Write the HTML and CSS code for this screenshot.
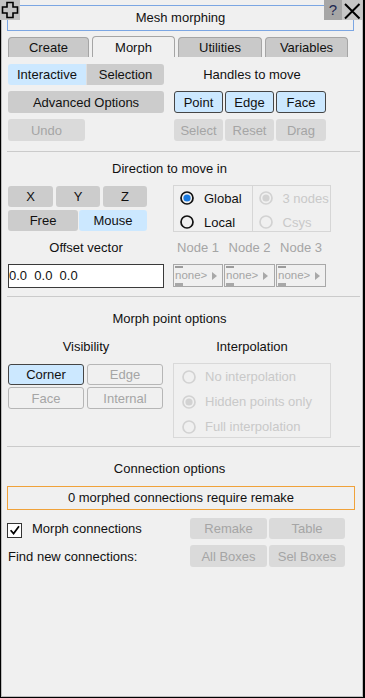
FILE: index.html
```html
<!DOCTYPE html>
<html lang="en">
<head>
    <meta charset="UTF-8">
    <meta name="viewport" content="width=device-width, initial-scale=1.0">
    <title>Mesh morphing</title>
    <link rel="stylesheet" href="styles.css">
</head>
<body>
    <div class="window">
        <div class="frame">
            <!-- window chrome -->
            <div class="grip">
                <svg width="20" height="20" viewBox="0 0 20 20"><path d="M7 2.5H13V7H17.5V13H13V17.5H7V13H2.5V7H7Z" fill="none" stroke="#000" stroke-width="1.6"/></svg>
            </div>
            <div class="win-btns">
                <span class="win-help">?</span>
                <span class="win-close">
                    <svg width="20" height="20" viewBox="0 0 20 20"><path d="M3 4L17.5 18.5M17.5 4L3 18.5" stroke="#000" stroke-width="2"/></svg>
                </span>
            </div>

            <div class="title">Mesh morphing</div>

            <div class="tabs">
                <div class="tab tab-create">Create</div>
                <div class="tab active">Morph</div>
                <div class="tab tab-utilities">Utilities</div>
                <div class="tab">Variables</div>
            </div>

            <!-- mode / handles -->
            <div class="top-grid">
                <div class="seg">
                    <span class="btn on">Interactive</span>
                    <span class="btn">Selection</span>
                </div>
                <div class="label">Handles to move</div>
                <div class="btn">Advanced Options</div>
                <div class="btn-row">
                    <span class="btn on framed">Point</span>
                    <span class="btn on framed">Edge</span>
                    <span class="btn on framed">Face</span>
                </div>
                <div class="btn off undo">Undo</div>
                <div class="btn-row">
                    <span class="btn off">Select</span>
                    <span class="btn off">Reset</span>
                    <span class="btn off">Drag</span>
                </div>
            </div>

            <div class="sep sep-first"></div>

            <!-- direction -->
            <div class="heading heading-dir">Direction to move in</div>
            <div class="dir-grid">
                <div>
                    <div class="axis-row">
                        <span class="btn axis-x">X</span>
                        <span class="btn">Y</span>
                        <span class="btn">Z</span>
                    </div>
                    <div class="mode-row">
                        <span class="btn free">Free</span>
                        <span class="btn on mouse">Mouse</span>
                    </div>
                </div>
                <div class="radio-box">
                    <div class="radio-col">
                        <div class="opt">
                            <svg class="radio" width="14" height="14" viewBox="0 0 14 14"><circle cx="7" cy="7" r="6" fill="none" stroke="#111" stroke-width="1.7"/><circle cx="7" cy="7" r="3.6" fill="#1a7ae0"/></svg>
                            Global
                        </div>
                        <div class="opt">
                            <svg class="radio" width="14" height="14" viewBox="0 0 14 14"><circle cx="7" cy="7" r="6" fill="none" stroke="#111" stroke-width="1.7"/></svg>
                            Local
                        </div>
                    </div>
                    <div class="radio-col disabled">
                        <div class="opt">
                            <svg class="radio" width="14" height="14" viewBox="0 0 14 14"><circle cx="7" cy="7" r="6" fill="none" stroke="#d2d2d2" stroke-width="1.7"/><circle cx="7" cy="7" r="3.6" fill="#d2d2d2"/></svg>
                            3 nodes
                        </div>
                        <div class="opt">
                            <svg class="radio" width="14" height="14" viewBox="0 0 14 14"><circle cx="7" cy="7" r="6" fill="none" stroke="#d2d2d2" stroke-width="1.7"/></svg>
                            Csys
                        </div>
                    </div>
                </div>
            </div>

            <div class="io-grid">
                <div class="label">Offset vector</div>
                <div class="node-row node-labels">
                    <span>Node 1</span>
                    <span class="mid">Node 2</span>
                    <span>Node 3</span>
                </div>
                <div class="vec">0.0  0.0  0.0</div>
                <div class="node-row">
                    <span class="node">none&gt;<i class="tri"></i></span>
                    <span class="node mid">none&gt;<i class="tri"></i></span>
                    <span class="node">none&gt;<i class="tri"></i></span>
                </div>
            </div>

            <div class="sep"></div>

            <!-- morph point options -->
            <div class="heading">Morph point options</div>
            <div class="sub-grid">
                <div class="label">Visibility</div>
                <div class="label">Interpolation</div>
            </div>
            <div class="point-grid">
                <div class="vis">
                    <span class="btn on framed">Corner</span>
                    <span class="btn ghost">Edge</span>
                    <span class="btn ghost">Face</span>
                    <span class="btn ghost">Internal</span>
                </div>
                <div class="interp disabled">
                    <div class="opt">
                        <svg class="radio" width="14" height="14" viewBox="0 0 14 14"><circle cx="7" cy="7" r="6" fill="none" stroke="#d2d2d2" stroke-width="1.7"/></svg>
                        No interpolation
                    </div>
                    <div class="opt">
                        <svg class="radio" width="14" height="14" viewBox="0 0 14 14"><circle cx="7" cy="7" r="6" fill="none" stroke="#d2d2d2" stroke-width="1.7"/><circle cx="7" cy="7" r="3.6" fill="#d2d2d2"/></svg>
                        Hidden points only
                    </div>
                    <div class="opt">
                        <svg class="radio" width="14" height="14" viewBox="0 0 14 14"><circle cx="7" cy="7" r="6" fill="none" stroke="#d2d2d2" stroke-width="1.7"/></svg>
                        Full interpolation
                    </div>
                </div>
            </div>

            <div class="sep"></div>

            <!-- connections -->
            <div class="heading">Connection options</div>
            <div class="notice">0 morphed connections require remake</div>
            <div class="conn-grid">
                <label class="check-label">
                    <span class="checkbox">
                        <svg width="13" height="13" viewBox="0 0 13 13"><path d="M2.6 6.2L5.6 9.6L11 2.2" fill="none" stroke="#000" stroke-width="1.7"/></svg>
                    </span>
                    Morph connections
                </label>
                <span class="btn off">Remake</span>
                <span class="btn off">Table</span>
                <div class="find">Find new connections:</div>
                <span class="btn off">All Boxes</span>
                <span class="btn off">Sel Boxes</span>
            </div>
        </div>
    </div>
</body>
</html>
```

FILE: styles.css
```css
:root {
    --bg: #f0f0f0;
    --btn: #cccccc;
    --btn-off: #dadada;
    --on: #cce8ff;
    --text: #111;
    --text-off: #a5a5a5;
    --text-faint: #c9c9c9;
    --line: #cbcbcb;
}

body {
    margin: 0;
    font-family: 'Liberation Sans', Arial, sans-serif;
    font-size: 13px;
    color: var(--text);
}

.window {
    width: 365px;
    height: 698px;
    box-sizing: border-box;
    border-style: solid;
    border-color: #000;
    border-width: 0 2px 1px 1px;
    background: var(--bg);
}

.frame {
    position: relative;
    height: 100%;
    box-sizing: border-box;
    border: solid #bdbdbd;
    border-width: 0 1px 1px 1px;
    padding: 5px 6px 0;
}

/* window chrome */
.grip {
    position: absolute;
    left: -2px;
    top: 0;
    width: 20px;
    height: 20px;
    background: #c3c3c3;
}

.grip svg,
.win-close svg {
    display: block;
}

.win-btns {
    position: absolute;
    right: 0;
    top: 0;
    display: flex;
    height: 20px;
}

.win-help {
    width: 18px;
    background: #a6a6a6;
    color: #1d2750;
    font-size: 15px;
    line-height: 20px;
    text-align: center;
}

.win-close {
    width: 20px;
    background: #c6c6c6;
}

.title {
    margin: 0 2px 0 -1px;
    height: 26px;
    box-sizing: border-box;
    border: 1px solid #7ba6e3;
    text-align: center;
    line-height: 24px;
}

/* tabs */
.tabs {
    display: flex;
    align-items: flex-end;
    gap: 3px;
    height: 21px;
    margin-top: 5px;
}

.tab {
    width: 83px;
    height: 20px;
    box-sizing: border-box;
    border: 1px solid #a5a5a5;
    border-bottom: none;
    border-radius: 4px 4px 0 0;
    background: #c9c9c9;
    text-align: center;
    line-height: 19px;
}

.tab-create {
    width: 81px;
}

.tab-utilities {
    width: 84px;
}

.tab.active {
    height: 21px;
    line-height: 21px;
    background: var(--bg);
}

/* buttons */
.btn {
    display: flex;
    align-items: center;
    justify-content: center;
    box-sizing: border-box;
    border-radius: 3px;
    background: var(--btn);
    white-space: nowrap;
}

.btn.on {
    background: var(--on);
}

.btn.framed {
    border: 1px solid #454545;
}

.btn.off {
    background: var(--btn-off);
    color: var(--text-off);
}

.btn.ghost {
    border: 1px solid #b6b6b6;
    background: transparent;
    color: var(--text-off);
}

.label {
    display: flex;
    align-items: center;
    justify-content: center;
    line-height: 16px;
}

.seg {
    display: flex;
}

.seg .btn {
    width: 78px;
}

.seg .btn:first-child {
    border-radius: 3px 0 0 3px;
}

.seg .btn:last-child {
    border-radius: 0 3px 3px 0;
    border-left: 1px solid #dedede;
}

.top-grid {
    display: grid;
    grid-template-columns: 156px 158px;
    grid-template-rows: 21px 22px 22px;
    column-gap: 9px;
    row-gap: 6px;
    margin-top: 7px;
}

.btn-row {
    display: flex;
    gap: 2px;
    padding-left: 1px;
}

.btn-row .btn {
    width: 49px;
}

.btn-row .btn:last-child {
    width: 50px;
}

.undo {
    width: 77px;
}

.sep {
    height: 1px;
    background: var(--line);
    margin: 8px -4px 0 -1px;
}

.sep-first {
    margin-top: 10px;
}

.heading {
    width: 323px;
    text-align: center;
    line-height: 16px;
    margin-top: 14px;
}

.heading-dir {
    margin-top: 9px;
}

/* direction */
.dir-grid {
    display: grid;
    grid-template-columns: 139px 158px;
    column-gap: 26px;
    align-items: start;
    margin-top: 9px;
}

.axis-row {
    display: flex;
    gap: 3px;
    height: 21px;
}

.axis-row .btn {
    width: 44px;
}

.axis-row .axis-x {
    width: 45px;
}

.mode-row {
    display: flex;
    gap: 1px;
    height: 21px;
    margin-top: 3px;
}

.free {
    width: 70px;
}

.mouse {
    width: 68px;
}

.radio-box {
    display: flex;
    height: 47px;
    margin-top: -1px;
    box-sizing: border-box;
    border: 1px solid #d6d6d6;
}

.radio-col {
    flex: 1;
}

.radio-col + .radio-col {
    border-left: 1px solid #d6d6d6;
}

.opt {
    display: flex;
    align-items: center;
    height: 24px;
    box-sizing: border-box;
    white-space: nowrap;
}

.radio-col .opt + .opt {
    height: 21px;
    padding-top: 3px;
}

.radio {
    flex: none;
    margin: 0 10px 0 6px;
}

.disabled {
    color: var(--text-faint);
}

/* offset / nodes */
.io-grid {
    display: grid;
    grid-template-columns: 156px 158px;
    column-gap: 9px;
    row-gap: 8px;
    margin-top: 8px;
}

.node-row {
    display: flex;
    gap: 1px;
}

.node-labels span {
    width: 50px;
    text-align: center;
    line-height: 16px;
    color: var(--text-off);
}

.node-row .mid {
    width: 51px;
}

.vec {
    height: 24px;
    box-sizing: border-box;
    border: 1px solid #3a3a3a;
    background: #fff;
    line-height: 22px;
    white-space: pre;
}

.node {
    position: relative;
    width: 50px;
    height: 23px;
    box-sizing: border-box;
    border: 1px solid #a8a8a8;
    padding-left: 1px;
    color: var(--text-off);
    font-size: 11.5px;
    line-height: 21px;
    white-space: nowrap;
    overflow: hidden;
}

.node::before,
.node::after {
    content: '';
    position: absolute;
    left: 1px;
    width: 8px;
    background: #9c9c9c;
}

.node::before {
    top: 1px;
    height: 2px;
}

.node::after {
    bottom: 0;
    height: 3px;
    background: #a8a8a8;
}

.tri {
    display: inline-block;
    vertical-align: -1px;
    margin-left: 5px;
    border-left: 5px solid #a8a8a8;
    border-top: 4px solid transparent;
    border-bottom: 4px solid transparent;
}

/* morph point options */
.sub-grid {
    display: grid;
    grid-template-columns: 156px 158px;
    column-gap: 9px;
    margin-top: 12px;
}

.point-grid {
    display: grid;
    grid-template-columns: 156px 158px;
    column-gap: 9px;
    align-items: start;
    margin-top: 8px;
}

.vis {
    display: grid;
    grid-template-columns: 76px 76px;
    grid-template-rows: 21px 22px;
    column-gap: 3px;
    row-gap: 2px;
    margin-top: 1px;
}

.interp {
    height: 75px;
    box-sizing: border-box;
    border: 1px solid #d9d9d9;
}

.interp .opt {
    height: 25px;
}

.interp .radio {
    margin: 0 9px 0 8px;
}

/* connections */
.notice {
    width: 348px;
    height: 24px;
    margin: 9px 0 0 -1px;
    box-sizing: border-box;
    border: 1px solid #f0a23a;
    text-align: center;
    line-height: 22px;
}

.conn-grid {
    display: grid;
    grid-template-columns: 180px 77px 76px;
    grid-template-rows: 21px 22px;
    column-gap: 2px;
    row-gap: 6px;
    margin-top: 8px;
}

.check-label {
    display: flex;
    align-items: center;
    gap: 10px;
    margin-left: -1px;
}

.checkbox {
    display: flex;
    align-items: center;
    justify-content: center;
    width: 15px;
    height: 15px;
    margin-top: 3px;
    box-sizing: border-box;
    border: 1px solid #333;
    background: #fff;
}

.checkbox svg {
    display: block;
}

.find {
    display: flex;
    align-items: center;
}
```
